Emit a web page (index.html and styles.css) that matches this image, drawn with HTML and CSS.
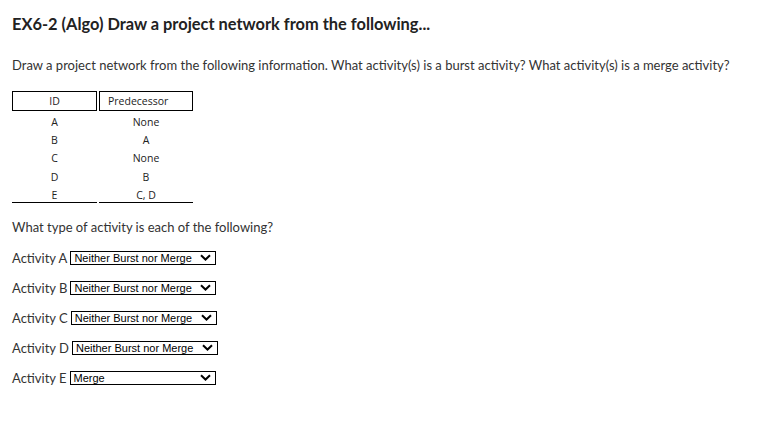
FILE: index.html
```html
<!DOCTYPE html>
<html lang="en">
<head>
    <meta charset="UTF-8">
    <title>EX6-2 (Algo)</title>
    <link rel="stylesheet" href="styles.css">
</head>
<body>

    <!-- Question title -->
    <h1 class="title">EX6-2 (Algo) Draw a project network from the following...</h1>

    <p class="prompt">Draw a project network from the following information. What activity(s) is a burst activity? What activity(s) is a merge activity?</p>

    <!-- Activity table -->
    <table class="activity-table">
        <thead>
            <tr>
                <th class="col-id">ID</th>
                <th class="col-pred">Predecessor</th>
            </tr>
        </thead>
        <tbody>
            <tr class="first"><td>A</td><td>None</td></tr>
            <tr><td>B</td><td>A</td></tr>
            <tr><td>C</td><td>None</td></tr>
            <tr><td>D</td><td>B</td></tr>
            <tr class="last"><td>E</td><td>C, D</td></tr>
        </tbody>
    </table>

    <p class="prompt sub">What type of activity is each of the following?</p>

    <!-- Answers -->
    <div class="answers">
        <div class="answer">
            <span class="label">Activity A</span>
            <span class="select"><span class="value">Neither Burst nor Merge</span><span class="chev"><svg width="11" height="7" viewBox="0 0 11 7"><path d="M1 1.2 L5.5 5.5 L10 1.2" fill="none" stroke="#000" stroke-width="2"/></svg></span></span>
        </div>
        <div class="answer">
            <span class="label">Activity B</span>
            <span class="select"><span class="value">Neither Burst nor Merge</span><span class="chev"><svg width="11" height="7" viewBox="0 0 11 7"><path d="M1 1.2 L5.5 5.5 L10 1.2" fill="none" stroke="#000" stroke-width="2"/></svg></span></span>
        </div>
        <div class="answer">
            <span class="label">Activity C</span>
            <span class="select"><span class="value">Neither Burst nor Merge</span><span class="chev"><svg width="11" height="7" viewBox="0 0 11 7"><path d="M1 1.2 L5.5 5.5 L10 1.2" fill="none" stroke="#000" stroke-width="2"/></svg></span></span>
        </div>
        <div class="answer">
            <span class="label">Activity D</span>
            <span class="select"><span class="value">Neither Burst nor Merge</span><span class="chev"><svg width="11" height="7" viewBox="0 0 11 7"><path d="M1 1.2 L5.5 5.5 L10 1.2" fill="none" stroke="#000" stroke-width="2"/></svg></span></span>
        </div>
        <div class="answer">
            <span class="label">Activity E</span>
            <span class="select"><span class="value">Merge</span><span class="chev"><svg width="11" height="7" viewBox="0 0 11 7"><path d="M1 1.2 L5.5 5.5 L10 1.2" fill="none" stroke="#000" stroke-width="2"/></svg></span></span>
        </div>
    </div>

</body>
</html>
```

FILE: styles.css
```css
/* General */
body {
    margin: 0;
    padding: 0 12px;
    background: #fff;
    font-family: Lato, "Open Sans", sans-serif;
    color: #333;
}

.title {
    margin: 0;
    padding-top: 14px;
    font-size: 16.4px;
    font-weight: bold;
    color: #222;
    line-height: 20px;
}

.prompt {
    margin: 23px 0 0;
    font-size: 13px;
    line-height: 16px;
}

.prompt.sub {
    margin-top: 16px;
}

/* Table */
.activity-table {
    margin-top: 18px;
    border-spacing: 2px 0;
    margin-left: -2px;
    font-family: "Open Sans", sans-serif;
    font-size: 10.5px;
    color: #222;
}

.activity-table th {
    font-weight: normal;
    border: 1px solid #000;
    height: 18px;
    padding: 0;
}

.activity-table .col-id {
    width: 83px;
    text-align: center;
}

.activity-table .col-pred {
    width: 84px;
    text-align: left;
    padding-left: 8px;
}

.activity-table td {
    text-align: center;
    height: 18.2px;
    padding: 0;
}

.activity-table tr.first td {
    padding-top: 2px;
}

.activity-table tr.last td {
    border-bottom: 1px solid #000;
    height: 16px;
    vertical-align: bottom;
}

/* Answers */
.answers {
    margin-top: 8px;
}

.answer {
    display: flex;
    align-items: center;
    height: 30px;
    font-size: 13px;
}

.answer .label {
    margin-right: 3px;
}

.select {
    display: flex;
    align-items: center;
    justify-content: space-between;
    box-sizing: border-box;
    width: 146px;
    height: 14px;
    border: 1px solid #000;
    padding: 0 4px 0 3px;
    font-family: "Liberation Sans", Arial, sans-serif;
    font-size: 11px;
    color: #000;
}

.chev {
    display: flex;
}
```
